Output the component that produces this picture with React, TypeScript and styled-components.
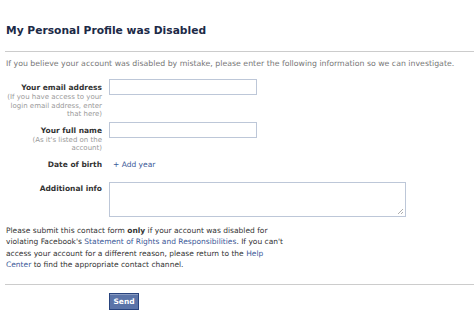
import React from 'react'
import styled, { createGlobalStyle } from 'styled-components'

const GlobalStyle = createGlobalStyle`
  html, body {
    margin: 0;
    padding: 0;
    background: #fff;
  }
  body {
    font-family: "DejaVu Sans", Verdana, sans-serif;
    color: #333;
  }
`

const Page = styled.div`
  width: 474px;
  height: 316px;
  overflow: hidden;
  padding-top: 23px;
  box-sizing: border-box;
`

const Title = styled.h1`
  margin: 0 0 0 6px;
  font-size: 10.7px;
  line-height: 16px;
  font-weight: bold;
  color: #1c2a47;
`

const Divider = styled.hr<{ $top: number }>`
  margin: ${p => p.$top}px 0 0 5px;
  border: none;
  border-top: 1px solid #ccc;
`

const Intro = styled.p`
  margin: 6px 0 0 6px;
  font-size: 7.8px;
  line-height: 11px;
  color: #777;
  white-space: nowrap;
`

const Form = styled.div`
  display: grid;
  grid-template-columns: 104px 1fr;
  column-gap: 5px;
  row-gap: 3px;
  margin-top: 10px;
`

const Label = styled.div<{ $pad?: number; $after?: number }>`
  text-align: right;
  font-size: 7.5px;
  font-weight: bold;
  color: #333;
  line-height: 10px;
  padding-top: ${p => p.$pad ?? 4}px;
  padding-bottom: ${p => p.$after ?? 0}px;
  padding-right: 2px;
`

const Hint = styled.span`
  display: block;
  font-size: 7px;
  font-weight: normal;
  color: #999;
  line-height: 8.5px;
  white-space: nowrap;
`

const Input = styled.div`
  width: 148px;
  height: 16px;
  border: 1px solid #bdc7d8;
  box-sizing: border-box;
  background: #fff;
`

const TextArea = styled.div`
  position: relative;
  width: 297px;
  height: 35px;
  border: 1px solid #bdc7d8;
  box-sizing: border-box;
  margin-top: 1px;
`

const Grip = styled.svg`
  position: absolute;
  right: 1px;
  bottom: 1px;
`

const AddYear = styled.a`
  font-size: 7.5px;
  color: #3b5998;
  line-height: 10px;
  padding: 4px 0 0 4px;
  text-decoration: none;
`

const Note = styled.p`
  margin: 8px 0 0 6px;
  width: 280px;
  font-size: 7.5px;
  line-height: 11.6px;
  color: #333;
`

const Link = styled.a`
  color: #3b5998;
  text-decoration: none;
`

const Actions = styled.div`
  display: flex;
  padding: 8px 0 0 109px;
`

const SendButton = styled.button`
  width: 30px;
  height: 17px;
  padding: 0;
  background: #5b74a8;
  border: 1px solid #29447e;
  color: #fff;
  font-family: "DejaVu Sans", Verdana, sans-serif;
  font-size: 7.5px;
  font-weight: bold;
  box-shadow: inset 0 1px 0 #8a9cc2;
`

export default function App() {
  return (
    <>
      <GlobalStyle />
      <Page>
        <Title>My Personal Profile was Disabled</Title>
        <Divider $top={12} />
        <Intro>
          If you believe your account was disabled by mistake, please enter the following information so we can investigate.
        </Intro>
        <Form>
          <Label>
            Your email address
            <Hint>
              (If you have access to your
              <br />
              login email address, enter
              <br />
              that here)
            </Hint>
          </Label>
          <Input />
          <Label>
            Your full name
            <Hint>
              (As it's listed on the
              <br />
              account)
            </Hint>
          </Label>
          <Input />
          <Label $after={8}>Date of birth</Label>
          <AddYear href="#">+ Add year</AddYear>
          <Label $pad={3}>Additional info</Label>
          <TextArea>
            <Grip width="7" height="7" viewBox="0 0 7 7">
              <path d="M6 1 L1 6 M6 4 L4 6" stroke="#999" strokeWidth="0.8" />
            </Grip>
          </TextArea>
        </Form>
        <Note>
          Please submit this contact form <b>only</b> if your account was disabled for violating Facebook's{' '}
          <Link href="#">Statement of Rights and Responsibilities</Link>. If you can't access your account for a different reason, please return to the{' '}
          <Link href="#">Help Center</Link> to find the appropriate contact channel.
        </Note>
        <Divider $top={13} />
        <Actions>
          <SendButton>Send</SendButton>
        </Actions>
      </Page>
    </>
  )
}
